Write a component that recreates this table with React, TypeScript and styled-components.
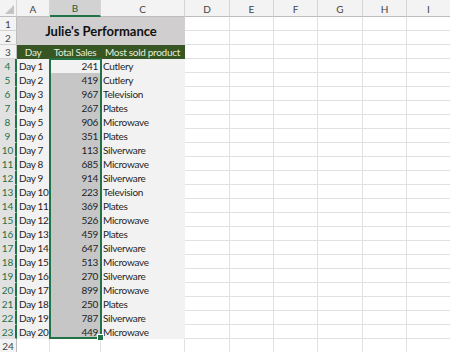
import React from "react";
import styled, { createGlobalStyle } from "styled-components";

const Global = createGlobalStyle`
  html, body { margin: 0; padding: 0; background: #ffffff; }
  body { font-family: Lato, "Open Sans", "Liberation Sans", sans-serif; }
`;

const data: [string, number, string][] = [
  ["Day 1", 241, "Cutlery"],
  ["Day 2", 419, "Cutlery"],
  ["Day 3", 967, "Television"],
  ["Day 4", 267, "Plates"],
  ["Day 5", 906, "Microwave"],
  ["Day 6", 351, "Plates"],
  ["Day 7", 113, "Silverware"],
  ["Day 8", 685, "Microwave"],
  ["Day 9", 914, "Silverware"],
  ["Day 10", 223, "Television"],
  ["Day 11", 369, "Plates"],
  ["Day 12", 526, "Microwave"],
  ["Day 13", 459, "Plates"],
  ["Day 14", 647, "Silverware"],
  ["Day 15", 513, "Microwave"],
  ["Day 16", 270, "Silverware"],
  ["Day 17", 899, "Microwave"],
  ["Day 18", 250, "Plates"],
  ["Day 19", 787, "Silverware"],
  ["Day 20", 449, "Microwave"],
];

const cols = ["A", "B", "C", "D", "E", "F", "G", "H", "I"];
const GREEN = "#217346";

const Sheet = styled.div`
  position: relative;
  display: grid;
  grid-template-columns: 17px 33px 51px 84px 45px 44px 44px 45px 44px 44px;
  grid-template-rows: 17px repeat(24, 14px);
  width: 451px;
  font-size: 10px;
  color: #1f1f1f;
`;

const Corner = styled.div`
  position: relative;
  background: #f3f3f3;
  border-right: 1px solid #d4d4d4;
  border-bottom: 1px solid #bdbdbd;
  box-sizing: border-box;
  &::after {
    content: "";
    position: absolute;
    right: 2px;
    bottom: 2px;
    width: 0;
    height: 0;
    border-left: 9px solid transparent;
    border-bottom: 9px solid #c4c4c4;
  }
`;

const ColHead = styled.div<{ $sel?: boolean }>`
  box-sizing: border-box;
  display: flex;
  align-items: center;
  justify-content: center;
  background: ${(p) => (p.$sel ? "#d2d2d2" : "#f3f3f3")};
  border-right: 1px solid #d4d4d4;
  border-bottom: ${(p) => (p.$sel ? `2px solid ${GREEN}` : "1px solid #bdbdbd")};
  color: ${(p) => (p.$sel ? "#1e5c38" : "#444444")};
  font-size: 10px;
  padding-top: 1px;
`;

const RowHead = styled.div<{ $sel?: boolean }>`
  box-sizing: border-box;
  display: flex;
  align-items: center;
  justify-content: center;
  background: ${(p) => (p.$sel ? "#e1e1e1" : "#f3f3f3")};
  border-bottom: 1px solid ${(p) => (p.$sel ? "#e1e1e1" : "#d4d4d4")};
  border-right: ${(p) => (p.$sel ? `2px solid ${GREEN}` : "1px solid #bdbdbd")};
  color: ${(p) => (p.$sel ? GREEN : "#444444")};
  font-size: 10px;
  line-height: 14px;
`;

const Cell = styled.div<{ $fill?: string; $align?: "left" | "right" | "center"; $color?: string }>`
  box-sizing: border-box;
  display: flex;
  align-items: center;
  justify-content: ${(p) =>
    p.$align === "right" ? "flex-end" : p.$align === "center" ? "center" : "flex-start"};
  padding: 0 2px;
  white-space: nowrap;
  overflow: visible;
  background: ${(p) => p.$fill ?? "#ffffff"};
  border-right: 1px solid ${(p) => p.$fill ?? "#e1e1e1"};
  border-bottom: 1px solid ${(p) => p.$fill ?? "#e1e1e1"};
  color: ${(p) => p.$color ?? "#1f1f1f"};
  line-height: 14px;
  font-size: 10px;
  letter-spacing: -0.3px;
`;

const Title = styled.div`
  grid-column: 2 / 5;
  grid-row: 2 / 4;
  display: flex;
  align-items: center;
  justify-content: center;
  background: #d0cece;
  font-weight: 700;
  font-size: 13px;
  color: #111;
`;

const Selection = styled.div`
  grid-column: 3 / 4;
  grid-row: 5 / 25;
  position: absolute;
  top: -1px;
  left: -1px;
  right: -1px;
  bottom: 0;
  border: 2px solid ${GREEN};
  pointer-events: none;
  z-index: 2;
`;

const FillHandle = styled.div`
  position: absolute;
  right: -4px;
  bottom: -4px;
  width: 5px;
  height: 5px;
  background: ${GREEN};
  border: 1px solid #ffffff;
`;

export default function App() {
  const cells: React.ReactNode[] = [];
  cells.push(<Corner key="corner" />);
  cols.forEach((c) => cells.push(<ColHead key={"h" + c} $sel={c === "B"}>{c}</ColHead>));

  for (let r = 1; r <= 2; r++) {
    cells.push(<RowHead key={"r" + r}>{r}</RowHead>);
    if (r === 1) cells.push(<Title key="title">Julie's Performance</Title>);
    for (let i = 3; i < 9; i++) cells.push(<Cell key={`c${r}-${i}`} />);
  }

  cells.push(<RowHead key="r3">3</RowHead>);
  ["Day", "Total Sales", "Most sold product"].forEach((t) =>
    cells.push(
      <Cell key={"hd" + t} $fill="#375623" $color="#e2efda" $align="center">
        {t}
      </Cell>
    )
  );
  for (let i = 3; i < 9; i++) cells.push(<Cell key={`c3-${i}`} />);

  data.forEach(([d, v, p], idx) => {
    const r = idx + 4;
    cells.push(
      <RowHead key={"r" + r} $sel>
        {r}
      </RowHead>
    );
    cells.push(
      <Cell key={`a${r}`} $fill="#f2f2f2">
        {d}
      </Cell>
    );
    cells.push(
      <Cell key={`b${r}`} $fill={idx === 0 ? "#f2f2f2" : "#c6c6c6"} $align="right">
        {v}
      </Cell>
    );
    cells.push(
      <Cell key={`c${r}`} $fill="#f2f2f2">
        {p}
      </Cell>
    );
    for (let i = 3; i < 9; i++) cells.push(<Cell key={`x${r}-${i}`} />);
  });

  cells.push(<RowHead key="r24">24</RowHead>);
  for (let i = 0; i < 9; i++) cells.push(<Cell key={`c24-${i}`} />);

  return (
    <>
      <Global />
      <Sheet>
        {cells}
        <Selection>
          <FillHandle />
        </Selection>
      </Sheet>
    </>
  );
}
